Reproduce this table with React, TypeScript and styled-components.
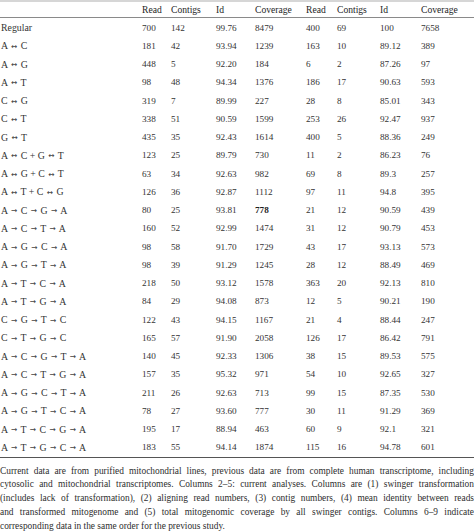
import React from "react";
import styled, { createGlobalStyle } from "styled-components";

const Global = createGlobalStyle`
  html, body { margin: 0; padding: 0; background: #fff; }
  body { font-family: "Liberation Serif", "Times New Roman", serif; color: #333; }
`;

const COLS = "142px 29px 45px 39px 51px 31px 43px 41px 1fr";

const Page = styled.div`
  width: 474px;
  overflow: hidden;
`;

const HeaderRow = styled.div`
  display: grid;
  grid-template-columns: ${COLS};
  height: 15px;
  align-items: center;
  border-top: 2px solid #d6d6d6;
  border-bottom: 1px solid #8a8a8a;
  font-weight: bold;
  font-size: 9.6px;
  color: #1e1e1e;
`;

const Row = styled.div`
  display: grid;
  grid-template-columns: ${COLS};
  height: 18.26px;
  align-items: center;
  font-size: 9.2px;
`;

const Body = styled.div`
  padding-top: 0.5px;
  border-bottom: 1.5px solid #555;
`;

const Cell = styled.div<{ $bold?: boolean }>`
  white-space: nowrap;
  font-weight: ${(p) => (p.$bold ? "bold" : "normal")};
  color: ${(p) => (p.$bold ? "#1e1e1e" : "inherit")};
`;

const Label = styled(Cell)`
  padding-left: 1px;
  font-size: 9.8px;
`;

const Arrow = styled.span`
  font-family: "DejaVu Sans", sans-serif;
  font-size: 7.5px;
  color: #444;
  margin: 0 1px;
  vertical-align: 0.5px;
`;

const Note = styled.div`
  padding-top: 7px;
  font-size: 9.4px;
  line-height: 13.8px;
  color: #2e2e2e;
  border-bottom: 2px solid #777;
`;

const NoteLine = styled.div<{ $last?: boolean }>`
  white-space: nowrap;
  text-align: justify;
  text-align-last: ${(p) => (p.$last ? "left" : "justify")};
`;

const rows: [string, ...string[]][] = [
  ["Regular", "700", "142", "99.76", "8479", "400", "69", "100", "7658"],
  ["A ↔ C", "181", "42", "93.94", "1239", "163", "10", "89.12", "389"],
  ["A ↔ G", "448", "5", "92.20", "184", "6", "2", "87.26", "97"],
  ["A ↔ T", "98", "48", "94.34", "1376", "186", "17", "90.63", "593"],
  ["C ↔ G", "319", "7", "89.99", "227", "28", "8", "85.01", "343"],
  ["C ↔ T", "338", "51", "90.59", "1599", "253", "26", "92.47", "937"],
  ["G ↔ T", "435", "35", "92.43", "1614", "400", "5", "88.36", "249"],
  ["A ↔ C + G ↔ T", "123", "25", "89.79", "730", "11", "2", "86.23", "76"],
  ["A ↔ G + C ↔ T", "63", "34", "92.63", "982", "69", "8", "89.3", "257"],
  ["A ↔ T + C ↔ G", "126", "36", "92.87", "1112", "97", "11", "94.8", "395"],
  ["A → C → G → A", "80", "25", "93.81", "*778", "21", "12", "90.59", "439"],
  ["A → C → T → A", "160", "52", "92.99", "1474", "31", "12", "90.79", "453"],
  ["A → G → C → A", "98", "58", "91.70", "1729", "43", "17", "93.13", "573"],
  ["A → G → T → A", "98", "39", "91.29", "1245", "28", "12", "88.49", "469"],
  ["A → T → C → A", "218", "50", "93.12", "1578", "363", "20", "92.13", "810"],
  ["A → T → G → A", "84", "29", "94.08", "873", "12", "5", "90.21", "190"],
  ["C → G → T → C", "122", "43", "94.15", "1167", "21", "4", "88.44", "247"],
  ["C → T → G → C", "165", "57", "91.90", "2058", "126", "17", "86.42", "791"],
  ["A → C → G → T → A", "140", "45", "92.33", "1306", "38", "15", "89.53", "575"],
  ["A → C → T → G → A", "157", "35", "95.32", "971", "54", "10", "92.65", "327"],
  ["A → G → C → T → A", "211", "26", "92.63", "713", "99", "15", "87.35", "530"],
  ["A → G → T → C → A", "78", "27", "93.60", "777", "30", "11", "91.29", "369"],
  ["A → T → C → G → A", "195", "17", "88.94", "463", "60", "9", "92.1", "321"],
  ["A → T → G → C → A", "183", "55", "94.14", "1874", "115", "16", "94.78", "601"],
];

const headers = ["", "Read", "Contigs", "Id", "Coverage", "Read", "Contigs", "Id", "Coverage"];

const noteLines = [
  "Current data are from purified mitochondrial lines, previous data are from complete human transcriptome, including",
  "cytosolic and mitochondrial transcriptomes. Columns 2–5: current analyses. Columns are (1) swinger transformation",
  "(includes lack of transformation), (2) aligning read numbers, (3) contig numbers, (4) mean identity between reads",
  "and transformed mitogenome and (5) total mitogenomic coverage by all swinger contigs. Columns 6–9 indicate",
  "corresponding data in the same order for the previous study.",
];

function renderLabel(label: string) {
  return label.split(/([↔→])/).map((part, i) =>
    part === "↔" || part === "→" ? <Arrow key={i}>{part}</Arrow> : <React.Fragment key={i}>{part}</React.Fragment>
  );
}

export default function App() {
  return (
    <Page>
      <Global />
      <HeaderRow>
        {headers.map((h, i) => (
          <Cell key={i}>{h}</Cell>
        ))}
      </HeaderRow>
      <Body>
        {rows.map(([label, ...vals], r) => (
          <Row key={r}>
            <Label>{renderLabel(label)}</Label>
            {vals.map((v, i) => {
              const bold = v.startsWith("*");
              return (
                <Cell key={i} $bold={bold}>
                  {bold ? v.slice(1) : v}
                </Cell>
              );
            })}
          </Row>
        ))}
      </Body>
      <Note>
        {noteLines.map((l, i) => (
          <NoteLine key={i} $last={i === noteLines.length - 1}>
            {l}
          </NoteLine>
        ))}
      </Note>
    </Page>
  );
}
